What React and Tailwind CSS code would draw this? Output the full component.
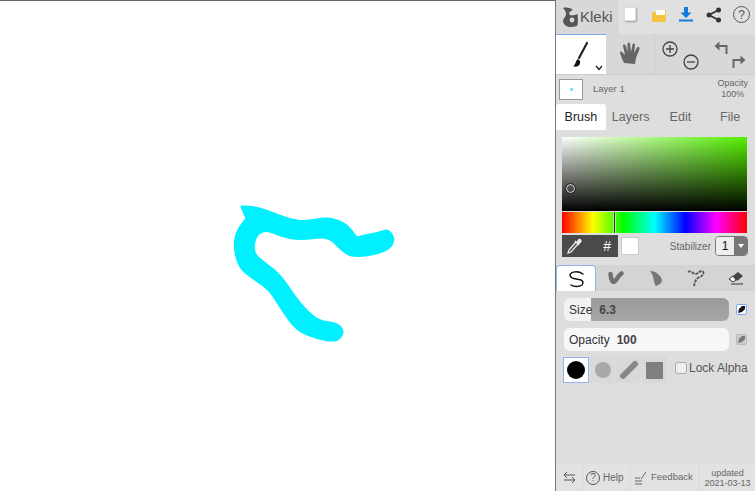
import React from "react";

const strokeOutline = [
  [65, 35], [65, 35], [110, 37], [160, 55], [210, 75], [260, 80], [320, 68], [370, 82], [395, 108], [410, 128], [410, 128],
  [480, 112], [505, 104], [525, 135], [500, 170], [400, 187], [365, 165], [325, 122], [240, 135], [180, 122], [140, 103],
  [105, 120], [98, 175], [135, 205], [180, 240], [220, 300], [260, 350], [300, 380], [350, 385], [373, 410], [350, 440],
  [290, 430], [230, 405], [190, 350], [150, 285], [100, 250], [60, 220], [42, 160], [50, 110], [80, 70], [80, 70],
];

function smooth(points) {
  const mid = (a, b) => [(a[0] + b[0]) / 2, (a[1] + b[1]) / 2];
  const n = points.length;
  const s = mid(points[n - 1], points[0]);
  let d = `M${s[0]} ${s[1]}`;
  for (let i = 0; i < n; i++) {
    const m = mid(points[i], points[(i + 1) % n]);
    d += ` Q${points[i][0]} ${points[i][1]} ${m[0]} ${m[1]}`;
  }
  return d + " Z";
}

export default function App() {
  return (
    <div className="flex h-[491px] w-[755px] overflow-hidden bg-white font-['Liberation_Sans',Arial,sans-serif]">
      <div className="flex-1 border-t border-[#666] bg-white">
        <svg viewBox="0 0 555 490" className="h-full w-full" fill="none">
          <g transform="translate(220 194) scale(0.33333)">
            <path d={smooth(strokeOutline)} fill="#00f0ff" stroke="#00f0ff" strokeWidth="7" strokeLinejoin="round" />
          </g>
        </svg>
      </div>
      <div className="flex w-[200px] shrink-0 flex-col border-l border-[#777] bg-[#dedede] text-[#555]">
        {/* top bar */}
        <div className="flex h-[34px] items-stretch bg-[#e0e0e0]">
          <div className="flex w-[62px] shrink-0 items-center gap-[1px] border-r border-[#d0d0d0] bg-[#d8d8d8] pl-[6px]">
            <svg width="17" height="22" viewBox="0 0 17 22">
              <path d="M1 2 C5 1 9 2 11 4 C8 5 6 7 8 9 C10 10 13 9 16 8 C15 12 17 16 15 20 C11 21 6 22 3 19 C0 16 1 13 3 11 C5 8 4 5 1 2 Z" fill="#555" />
              <circle cx="10" cy="14" r="2.4" fill="#d8d8d8" />
            </svg>
            <span className="text-[15px] text-[#555]">Kleki</span>
          </div>
          <div className="flex flex-1 items-start pt-[6px]">
            <div className="ml-[6px] mt-[1px] h-[14px] w-[12px] rounded-[1px] border border-[#ddd] bg-white shadow-[1px_1px_2px_rgba(0,0,0,0.3)]" />
            <svg className="ml-[16px] mt-[3px]" width="14" height="13" viewBox="0 0 14 13">
              <path d="M0 3 H4 L5 1 H14 V13 H0 Z" fill="#f5c542" />
              <path d="M4 1 H13 V6 H4 Z" fill="#fff" />
            </svg>
            <svg className="ml-[13px] mt-[1px]" width="14" height="15" viewBox="0 0 14 15">
              <path d="M5 0 H9 V5.5 H12.5 L7 11 L1.5 5.5 H5 Z" fill="#0f7ce0" />
              <rect x="0" y="12.5" width="14" height="2" fill="#0f7ce0" />
            </svg>
            <svg className="ml-[13px] mt-[1px]" width="16" height="16" viewBox="0 0 16 16" fill="none">
              <path d="M12.5 3 L3 8 L12.5 13" stroke="#333" strokeWidth="1.8" />
              <circle cx="12.5" cy="3" r="2.5" fill="#333" />
              <circle cx="3" cy="8" r="2.5" fill="#333" />
              <circle cx="12.5" cy="13" r="2.5" fill="#333" />
            </svg>
            <div className="ml-[11px] flex h-[17px] w-[17px] items-center justify-center rounded-full border-[1.5px] border-[#555] text-[12px] leading-none">?</div>
          </div>
        </div>
        {/* tools */}
        <div className="flex h-[41px] items-stretch border-b border-[#ccc] bg-[#d8d8d8]">
          <div className="relative flex w-[50px] items-center justify-center border-t-[1px] border-[#7aa7f0] bg-white">
            <svg width="18" height="28" viewBox="0 0 18 28" fill="none">
              <path d="M15 2 L7 17" stroke="#222" strokeWidth="2.2" strokeLinecap="round" />
              <path d="M6 18 C3 20 4 24 1 25 C5 27 9 24 8 20 Z" fill="#111" />
            </svg>
            <svg className="absolute bottom-[3px] right-[3px]" width="8" height="6" viewBox="0 0 8 6" fill="none">
              <path d="M1 1 L4 4.5 L7 1" stroke="#222" strokeWidth="1.4" />
            </svg>
          </div>
          <div className="flex w-[49px] items-center justify-center border-r border-[#ccc]">
            <svg width="21" height="24" viewBox="0 0 21 24">
              <path d="M4 21 C2 17 1 14 0 11 C0 9 2 9 3 11 L5 13 L3 4 C3 2 5 2 6 4 L7.5 10 L7.5 1.5 C8 0 10 0 10 1.5 L11 10 L12.5 2.5 C13 1 15 1 15 3 L14 11 L17 5.5 C18 4.5 20 5 19.5 7 L16 16 L15 22 Z" fill="#666" />
            </svg>
          </div>
          <div className="flex w-[50px] items-start pl-[7px] pt-[7px]">
            <svg width="16" height="16" viewBox="0 0 16 16" fill="none" stroke="#444" strokeWidth="1.3">
              <circle cx="8" cy="8" r="7" />
              <path d="M4 8 H12 M8 4 V12" />
            </svg>
            <svg className="ml-[5px] mt-[13px]" width="16" height="16" viewBox="0 0 16 16" fill="none" stroke="#444" strokeWidth="1.3">
              <circle cx="8" cy="8" r="7" />
              <path d="M4 8 H12" />
            </svg>
          </div>
          <div className="flex flex-1 items-start pl-[9px] pt-[7px]">
            <svg width="14" height="14" viewBox="0 0 14 14" fill="none" stroke="#666" strokeWidth="2">
              <path d="M12.5 13 V5 H4" />
              <path d="M5.5 0.5 L0.5 5 L5.5 9.5 Z" fill="#666" stroke="none" />
            </svg>
            <svg className="ml-[4px] mt-[13px]" width="14" height="14" viewBox="0 0 14 14" fill="none" stroke="#666" strokeWidth="2">
              <path d="M1.5 14 V6 H10" />
              <path d="M8.5 1.5 L13.5 6 L8.5 10.5 Z" fill="#666" stroke="none" />
            </svg>
          </div>
        </div>
        {/* layer */}
        <div className="flex h-[29px] items-center">
          <div className="ml-[3px] flex h-[21px] w-[24px] items-center justify-center border border-[#999] bg-white">
            <div className="h-[3px] w-[3px] bg-[#7fe8ef]" />
          </div>
          <span className="ml-[10px] text-[9.5px] text-[#666]">Layer 1</span>
          <div className="ml-auto mb-[1px] mr-[7px] text-center text-[9px] leading-[11px] text-[#666]">
            Opacity
            <br />
            100%
          </div>
        </div>
        {/* tabs */}
        <div className="flex h-[26px] items-center text-[12.5px] text-[#666]">
          <div className="flex h-full w-[50px] items-center justify-center rounded-t-[3px] bg-white text-[#222]">Brush</div>
          <div className="flex h-full w-[50px] items-center justify-center">Layers</div>
          <div className="flex h-full w-[50px] items-center justify-center">Edit</div>
          <div className="flex h-full w-[50px] items-center justify-center">File</div>
        </div>
        {/* color */}
        <div className="px-[6px] pt-[7px]">
          <div className="relative h-[74px] w-[185px] bg-[linear-gradient(to_top,#000,transparent),linear-gradient(to_right,#fff,#55f000)]">
            <div className="absolute left-[4px] top-[47px] h-[9px] w-[9px] rounded-full border border-[#ddd] outline outline-1 outline-[#222]" />
          </div>
          <div className="relative mt-[1px] h-[21px] w-[185px] bg-[linear-gradient(to_right,#f00,#ff0,#0f0,#0ff,#00f,#f0f,#f00)]">
            <div className="absolute left-[51px] top-0 flex h-full w-[3px] justify-center bg-[#b0e8a0]">
              <div className="h-full w-[1px] bg-[#333]" />
            </div>
          </div>
          <div className="mt-[2px] flex h-[22px] items-center">
            <div className="flex h-full w-[56px] items-center justify-between bg-[#4a4a4a] px-[5px] text-white">
              <svg width="15" height="16" viewBox="0 0 15 16" fill="none">
                <path d="M9 4 L2 12 L1 15 L4 14 L11 6" stroke="#eee" strokeWidth="1.3" />
                <path d="M8 3 L12 7 M10 4 L12 1.5 C13 1 14.5 2.5 14 3.5 L11.5 6 Z" stroke="#eee" fill="#eee" strokeWidth="1.2" />
              </svg>
              <span className="mr-[2px] text-[14px] leading-none">#</span>
            </div>
            <div className="ml-[3px] h-[18px] w-[18px] border border-[#ccc] bg-white" />
            <span className="ml-auto mr-[4px] text-[10px] text-[#666]">Stabilizer</span>
            <div className="mr-[1px] flex h-[20px] w-[33px] overflow-hidden rounded-[4px] border border-[#777]">
              <div className="flex w-[18px] items-center justify-center bg-[#eee] text-[12px] text-[#111]">1</div>
              <div className="flex flex-1 items-center justify-center bg-[#777]">
                <div className="h-0 w-0 border-x-[3px] border-t-[4px] border-x-transparent border-t-white" />
              </div>
            </div>
          </div>
        </div>
        {/* brush tabs */}
        <div className="mt-[8px] flex h-[26px] items-stretch bg-[#d4d4d4]">
          <div className="flex w-[40px] items-center justify-center rounded-t-[4px] border-x border-t border-[#8fb2ee] bg-white">
            <svg width="17" height="18" viewBox="0 0 17 18" fill="none">
              <path d="M15 4 C11 1 3 1 2 5 C2 9 8 9 11 9.5 C15 10 16 13 14 15 C11 17 6 17 3 15" stroke="#111" strokeWidth="1.5" strokeLinecap="round" />
            </svg>
          </div>
          <div className="flex w-[40px] items-center justify-center">
            <svg width="18" height="16" viewBox="0 0 18 16" fill="none">
              <path d="M3.5 4 C4 10 6 14 8 11 C10 9 11 6 14.5 3.5" stroke="#707070" strokeWidth="4.5" strokeLinecap="round" />
            </svg>
          </div>
          <div className="flex w-[40px] items-center justify-center">
            <svg width="14" height="17" viewBox="0 0 14 17">
              <path d="M1 1 C7 1 13 6 13 11 C12 14 9 15 7 16 C4 13 6 7 1 1 Z" fill="#777" />
            </svg>
          </div>
          <div className="flex w-[40px] items-center justify-center">
            <svg width="18" height="18" viewBox="0 0 18 18" fill="none">
              <path d="M1 3 C4 1 6 5 9 5 C12 4 12 2 15 2 C18 3 16 7 13 8 C10 9 9 11 8 13 L7 17" stroke="#555" strokeWidth="1.8" strokeDasharray="3 1" />
            </svg>
          </div>
          <div className="flex flex-1 items-center justify-center">
            <svg width="16" height="15" viewBox="0 0 16 15" fill="none">
              <path d="M5 11 L1 8 L5 5 L8 9 Z" fill="#fff" stroke="#333" strokeWidth="1" />
              <path d="M10 1 L15 5 L9 10 L5 5 Z" fill="#444" />
              <path d="M3 13 H15" stroke="#333" strokeWidth="1" />
            </svg>
          </div>
        </div>
        {/* sliders */}
        <div className="mt-[7px] flex items-center pl-[8px]">
          <div className="relative flex h-[23px] w-[165px] items-center overflow-hidden rounded-[6px] bg-[#f2f2f2] text-[12px] text-[#333]">
            <div className="absolute inset-y-0 left-[27px] right-0 bg-[linear-gradient(to_bottom,#9a9a9a,#a6a6a6)]" />
            <span className="relative ml-[5px]">Size</span>
            <span className="relative ml-[7px] font-bold text-[#444]">6.3</span>
          </div>
          <div className="ml-[7px] flex h-[11px] w-[11px] items-center justify-center rounded-[2px] border border-[#7aa7f0] bg-white">
            <svg width="7" height="7" viewBox="0 0 7 7"><path d="M0 7 L1 3 L4 0 H7 V3 L4 6 Z" fill="#111" /></svg>
          </div>
        </div>
        <div className="mt-[7px] flex items-center pl-[8px]">
          <div className="flex h-[23px] w-[165px] items-center rounded-[6px] bg-[#f7f7f7] text-[12px] text-[#333]">
            <span className="ml-[5px]">Opacity</span>
            <span className="ml-[7px] font-bold text-[#444]">100</span>
          </div>
          <div className="ml-[7px] flex h-[11px] w-[11px] items-center justify-center rounded-[2px] border border-[#bbb] bg-[#ccc]">
            <svg width="7" height="7" viewBox="0 0 7 7"><path d="M0 7 L1 3 L4 0 H7 V3 L4 6 Z" fill="#777" /></svg>
          </div>
        </div>
        {/* shapes */}
        <div className="mt-[6px] flex items-start gap-[1px] pl-[7px]">
          <div className="flex h-[26px] w-[26px] items-center justify-center border border-[#8fb2ee] bg-white">
            <div className="h-[18px] w-[18px] rounded-full bg-black" />
          </div>
          <div className="flex h-[26px] w-[25px] items-center justify-center bg-[#d9d9d9]">
            <div className="h-[16px] w-[16px] rounded-full bg-[#a9a9a9] blur-[0.5px]" />
          </div>
          <div className="flex h-[26px] w-[25px] items-center justify-center bg-[#d9d9d9]">
            <svg width="20" height="20" viewBox="0 0 20 20" fill="none">
              <path d="M4 16 L16 4" stroke="#888" strokeWidth="6" strokeLinecap="round" />
            </svg>
          </div>
          <div className="flex h-[26px] w-[25px] items-center justify-center bg-[#d9d9d9]">
            <div className="h-[17px] w-[17px] bg-[#808080]" />
          </div>
          <div className="ml-[7px] mt-[2px] flex items-center">
            <div className="h-[12px] w-[12px] rounded-[3px] border border-[#aaa] bg-[#eee]" />
            <span className="ml-[2px] text-[12px] text-[#555]">Lock Alpha</span>
          </div>
        </div>
        {/* footer */}
        <div className="mt-auto flex h-[27px] items-stretch gap-[2px] text-[10px] text-[#666]">
          <div className="flex w-[26px] items-center justify-center bg-[#e2e2e2]">
            <svg width="13" height="13" viewBox="0 0 13 13" fill="none" stroke="#555" strokeWidth="1">
              <path d="M1 4 H12 M4 1 L1 4 L4 7 M12 9 H1 M9 6 L12 9 L9 12" />
            </svg>
          </div>
          <div className="flex w-[45px] items-center gap-[3px] bg-[#e2e2e2] pl-[2px]">
            <div className="flex h-[14px] w-[14px] items-center justify-center rounded-full border border-[#555] text-[10px] leading-none">?</div>
            <span>Help</span>
          </div>
          <div className="flex w-[67px] items-center gap-[5px] bg-[#e2e2e2] pl-[4px]">
            <svg width="11" height="14" viewBox="0 0 11 14" fill="none" stroke="#666" strokeWidth="1">
              <path d="M0 7 H5 M0 10 H7 M0 13 H7 M6 8 L11 1" />
            </svg>
            <span className="text-[9.5px]">Feedback</span>
          </div>
          <div className="flex flex-1 flex-col items-center justify-center bg-[#e2e2e2] text-[9px] leading-[10px]">
            <span>updated</span>
            <span>2021-03-13</span>
          </div>
        </div>
      </div>
    </div>
  );
}
